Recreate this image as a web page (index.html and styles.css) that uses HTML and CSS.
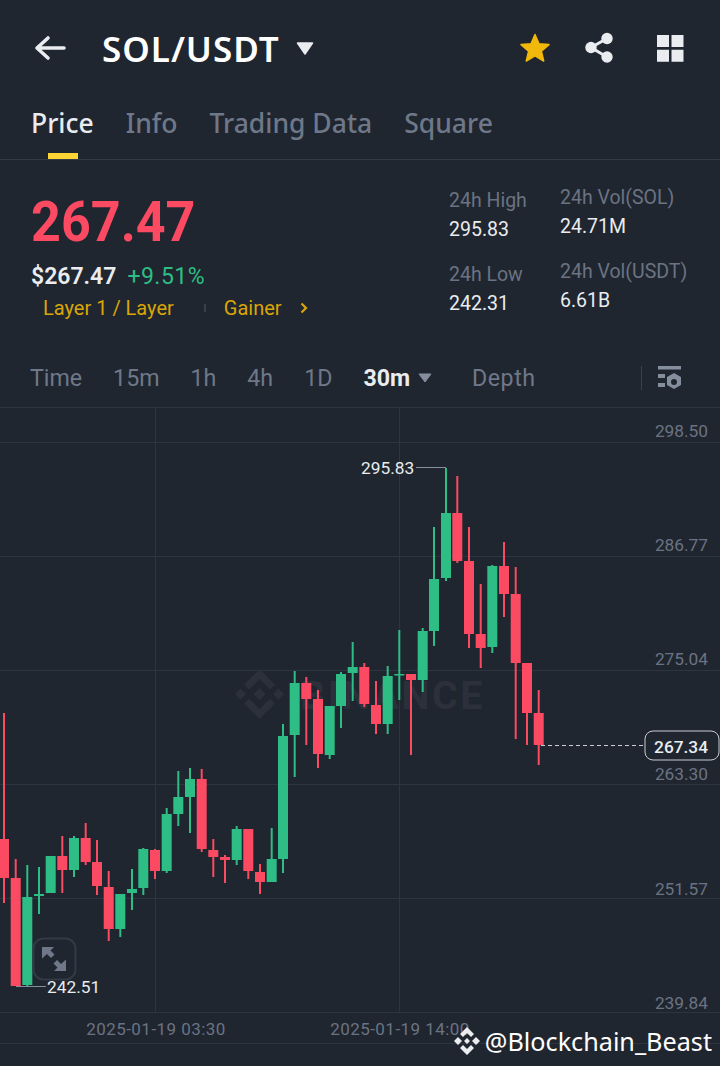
FILE: index.html
```html
<!DOCTYPE html>
<html lang="en">
<head>
    <meta charset="UTF-8">
    <meta name="viewport" content="width=device-width, initial-scale=1.0">
    <title>SOL/USDT</title>
    <link rel="stylesheet" href="styles.css">
</head>
<body>
    <header class="topbar">
        <svg class="back-icon" width="32" height="26" viewBox="0 0 32 26">
            <path d="M30 13H3M14 3 3 13l11 10" fill="none" stroke="#eaecef" stroke-width="3.6" stroke-linecap="round" stroke-linejoin="round"/>
        </svg>
        <h1 class="pair">SOL/USDT</h1>
        <svg class="pair-caret" width="18" height="13" viewBox="0 0 18 13">
            <path d="M1.5 1h15L9 12z" fill="#eaecef" stroke="#eaecef" stroke-width="1.5" stroke-linejoin="round"/>
        </svg>
        <div class="top-actions">
            <svg width="32" height="32" viewBox="0 0 32 32">
                <path d="M16 2.500l4 9.200 10 .9-7.600 6.600 2.300 9.800L16 23.800 7.300 29l2.300-9.800L2 12.600l10-.9z" fill="#f0b90b" stroke="#f0b90b" stroke-width="1.500" stroke-linejoin="round"/>
            </svg>
            <svg class="share-icon" width="32" height="32" viewBox="0 0 32 32">
                <path d="M24 6.500 8 15.500 24 25" fill="none" stroke="#eaecef" stroke-width="3"/>
                <circle cx="24" cy="6.500" r="5.700" fill="#eaecef"/>
                <circle cx="8" cy="15.500" r="5.700" fill="#eaecef"/>
                <circle cx="24" cy="25" r="5.700" fill="#eaecef"/>
            </svg>
            <svg width="28" height="28" viewBox="0 0 28 28">
                <path d="M1 1h12v12H1zM15.500 1h12v12h-12zM1 15.700h12v12H1zM15.500 15.700h12v12h-12z" fill="#eaecef"/>
            </svg>
        </div>
    </header>

    <nav class="tabs">
        <a class="tab active">Price</a>
        <a class="tab">Info</a>
        <a class="tab">Trading Data</a>
        <a class="tab">Square</a>
    </nav>

    <section class="stats">
        <div class="stats-main">
            <div class="last-price">267.47</div>
            <div class="price-line">
                <span class="usd-price">$267.47</span>
                <span class="change">+9.51%</span>
            </div>
            <div class="tags">
                <span>Layer 1 / Layer</span>
                <span class="tag-sep"></span>
                <span>Gainer</span>
                <svg width="8" height="12" viewBox="0 0 8 12">
                    <path d="M1.500 1.500 6 6l-4.500 4.500" fill="none" stroke="#d9a507" stroke-width="2.200"/>
                </svg>
            </div>
        </div>
        <div class="stats-col col-left">
            <div class="stat-label">24h High</div>
            <div class="stat-value">295.83</div>
            <div class="stat-label second">24h Low</div>
            <div class="stat-value">242.31</div>
        </div>
        <div class="stats-col">
            <div class="stat-label">24h Vol(SOL)</div>
            <div class="stat-value">24.71M</div>
            <div class="stat-label second">24h Vol(USDT)</div>
            <div class="stat-value">6.61B</div>
        </div>
    </section>

    <div class="timeframes">
        <span>Time</span>
        <span>15m</span>
        <span>1h</span>
        <span>4h</span>
        <span>1D</span>
        <span class="current">30m</span>
        <svg class="tf-caret" width="14" height="10" viewBox="0 0 14 10">
            <path d="M1 1h12L7 9z" fill="#848e9c" stroke="#848e9c" stroke-linejoin="round"/>
        </svg>
        <span class="depth">Depth</span>
        <span class="tf-divider"></span>
        <svg width="24" height="24" viewBox="0 0 24 24">
            <path d="M0 0h23v3.500H0zM0 8h7v4H0zM0 17h7v4H0z" fill="#848e9c"/>
            <path fill-rule="evenodd" d="M16 7l7 4v8l-7 4-7-4v-8zm0 6a3 3 0 1 0 0 6 3 3 0 0 0 0-6z" fill="#848e9c"/>
        </svg>
    </div>

    <div class="chart">
        <svg class="chart-svg" width="720" height="659" viewBox="0 407 720 659">
            <g class="grid">
                <path d="M0 407.500H720M0 442.500H720M0 556.500H720M0 670.500H720M0 784.500H720M0 898.500H720M0 1012.500H720M0 1043.500H720M155.500 408V1012M399.500 408V1012"/>
            </g>

            <g class="watermark">
                <path d="M259.500 669 275 684.500 270 689.500 259.500 679 249 689.500 244 684.500zM259.500 719 275 703.500 270 698.500 259.500 709 249 698.500 244 703.500zM240.500 688.500 246 694 240.500 699.500 235 694zM259.500 688 265.500 694 259.500 700 253.500 694zM278.500 688.500 284 694 278.500 699.500 273 694z"/>
                <text x="300" y="708.500" class="wm-text">BINANCE</text>
            </g>

            <g id="candles"></g>

            <g class="axis">
                <text x="708" y="437">298.50</text>
                <text x="708" y="551">286.77</text>
                <text x="708" y="665">275.04</text>
                <text x="708" y="780">263.30</text>
                <text x="708" y="895">251.57</text>
                <text x="708" y="1009">239.84</text>
                <text x="156" y="1035" class="date">2025-01-19 03:30</text>
                <text x="400" y="1035" class="date">2025-01-19 14:00</text>
            </g>

            <path class="hl-line" d="M416 467.500H446M16 986.500H46"/>
            <text x="361" y="474" class="hl-text">295.83</text>
            <text x="47" y="993" class="hl-text">242.51</text>

            <path class="last-line" d="M541 745.500H645"/>
            <rect class="last-box" x="645" y="731" width="74" height="29" rx="8"/>
            <text x="708" y="753" class="last-text">267.34</text>

            <rect class="expand-box" x="33.500" y="938.500" width="42" height="41" rx="10"/>
            <path class="expand-icon" d="M42 947h12l-3.500 3.500 4 4-3.500 3.500-4-4-5 4.500zM66 971H54l3.500-3.500-4-4 3.500-3.500 4 4 5-4.500z"/>
        </svg>

        <div class="credit">
            <svg width="28" height="28" viewBox="0 0 28 28">
                <path d="M14 0l7 7-3 3-4-4-4 4-3-3zM5 10l4 4-4 4-4-4zM14 11l3 3-3 3-3-3zM23 10l4 4-4 4-4-4zM14 28l7-7-3-3-4 4-4-4-3 3z" fill="#eaecef"/>
            </svg>
            <span>@Blockchain_Beast</span>
        </div>
    </div>

    <script src="chart.js"></script>
</body>
</html>
```

FILE: styles.css
```css
body {
    margin: 0;
    width: 720px;
    height: 1066px;
    overflow: hidden;
    background-color: #1f2630;
    color: #eaecef;
    font-family: "Noto Sans", sans-serif;
}

/* top bar */
.topbar {
    display: flex;
    align-items: center;
    height: 96px;
    padding: 0 36px 0 34px;
    box-sizing: border-box;
}

.back-icon {
    margin-right: 36px;
}

.pair {
    margin: 0 16px 0 0;
    font-size: 35px;
    font-weight: 600;
    letter-spacing: 1px;
    color: #fff;
}

.top-actions {
    display: flex;
    align-items: center;
    gap: 32px;
    margin-left: auto;
}

.share-icon {
    margin-right: 9px;
}

/* tabs */
.tabs {
    display: flex;
    gap: 32px;
    height: 64px;
    padding-left: 31px;
    box-sizing: border-box;
    border-bottom: 1px solid #333a46;
}

.tab {
    position: relative;
    font-size: 26.5px;
    font-weight: 500;
    line-height: 54px;
    color: #6f7888;
}

.tab.active {
    color: #eaecef;
}

.tab.active::after {
    content: "";
    position: absolute;
    left: 17px;
    bottom: 0;
    width: 30px;
    height: 6px;
    background-color: #fcd535;
}

/* price block */
.stats {
    display: flex;
    height: 189px;
    box-sizing: border-box;
    padding-top: 24px;
    font-family: Roboto, sans-serif;
}

.stats-main {
    width: 449px;
    padding-left: 31px;
    box-sizing: border-box;
}

.last-price {
    margin-top: 2px;
    font-size: 56px;
    font-weight: 700;
    line-height: 72px;
    color: #fb4a62;
    transform: scaleX(0.93);
    transform-origin: left;
}

.price-line {
    display: flex;
    gap: 11px;
    margin-top: 5px;
    font-size: 23px;
    line-height: 28px;
}

.usd-price {
    font-weight: 600;
}

.change {
    letter-spacing: 0.5px;
    color: #2ebd85;
}

.tags {
    display: flex;
    align-items: center;
    gap: 18px;
    margin: 4px 0 0 12px;
    font-size: 20px;
    line-height: 26px;
    color: #d9a507;
}

.tag-sep {
    width: 2px;
    height: 8px;
    margin-left: 12px;
    background-color: #39404c;
}

.stats-col {
    width: 111px;
    font-size: 19.5px;
    white-space: nowrap;
}

.col-left {
    padding-top: 3px;
}

.stat-label {
    line-height: 28px;
    color: #6b7382;
}

.stat-label.second {
    margin-top: 16px;
}

.stat-value {
    line-height: 30px;
}

/* interval row */
.timeframes {
    display: flex;
    align-items: center;
    height: 58px;
    padding-left: 30px;
    font-family: Roboto, sans-serif;
    font-size: 23.2px;
    color: #6f7888;
}

.timeframes span {
    margin-right: 31px;
}

.timeframes .current {
    margin-right: 8px;
    font-weight: 700;
    color: #eaecef;
}

.tf-caret {
    margin-right: 40px;
}

.timeframes .depth {
    margin-right: 106px;
    letter-spacing: 0.5px;
}

.timeframes .tf-divider {
    width: 1px;
    height: 24px;
    margin-right: 16px;
    background-color: #3a414e;
}

/* chart */
.chart {
    position: relative;
    height: 659px;
}

.chart-svg {
    display: block;
}

.grid path {
    fill: none;
    stroke: #2f3540;
    stroke-width: 1;
}

.watermark path {
    fill: #2b303b;
}

.wm-text {
    font-family: Roboto, sans-serif;
    font-size: 39.5px;
    font-weight: 700;
    letter-spacing: 2.5px;
    fill: #2b303b;
}

.axis text {
    font-family: Roboto, sans-serif;
    font-size: 17.3px;
    fill: #6b7382;
    text-anchor: end;
}

.axis .date {
    font-size: 17px;
    letter-spacing: 0.45px;
    text-anchor: middle;
}

.hl-line {
    fill: none;
    stroke: #848e9c;
    stroke-width: 1;
}

.hl-text {
    font-family: Roboto, sans-serif;
    font-size: 17.3px;
    fill: #eaecef;
}

.last-line {
    fill: none;
    stroke: #c9ccd1;
    stroke-width: 1;
    stroke-dasharray: 4 3;
}

.last-box {
    fill: #1f2630;
    stroke: #c9ccd1;
    stroke-width: 1;
}

.last-text {
    font-family: Roboto, sans-serif;
    font-size: 17.3px;
    font-weight: 500;
    fill: #eaecef;
    text-anchor: end;
}

.expand-box {
    fill: none;
    stroke: #333945;
    stroke-width: 2;
}

.expand-icon {
    fill: #6f7888;
}

.up {
    fill: #2ebd85;
}

.down {
    fill: #fb4a62;
}

/* repost credit over the chart */
.credit {
    position: absolute;
    right: 8px;
    bottom: 10px;
    display: flex;
    align-items: center;
    gap: 4px;
    font-size: 25.2px;
    line-height: 30px;
    color: #fff;
}
```

FILE: chart.js
```js
// x, wick top, wick bottom, body top, body bottom, up?
const candles = [
    [4, 713, 903, 839, 878, 0],
    [15.7, 859, 986, 878, 986, 0],
    [27.3, 865, 986, 897, 985, 1],
    [39, 867, 914, 894, 896, 1],
    [50.7, 856, 893, 856, 893, 1],
    [62.3, 836, 893, 856, 870, 0],
    [74, 836, 877, 838, 870, 1],
    [85.7, 823, 865, 838, 862, 0],
    [97, 840, 895, 862, 886, 0],
    [108.7, 871, 941, 887, 929, 0],
    [120.3, 894, 937, 894, 929, 1],
    [132, 869, 910, 889, 893, 1],
    [143.3, 848, 895, 849, 888, 1],
    [155, 849, 879, 850, 871, 0],
    [166.7, 808, 873, 814, 871, 1],
    [178.3, 771, 826, 797, 814, 1],
    [190, 768, 833, 779, 797, 1],
    [201.7, 769, 852, 779, 849, 0],
    [213.3, 839, 877, 850, 857, 0],
    [225, 855, 883, 857, 860, 0],
    [236.7, 826, 865, 829, 860, 1],
    [248.3, 829, 879, 829, 871, 0],
    [260, 864, 894, 872, 882, 0],
    [271.7, 828, 882, 859, 882, 1],
    [283, 724, 873, 736, 859, 1],
    [294.7, 671, 777, 683, 735, 1],
    [306.3, 677, 745, 683, 699, 0],
    [318, 690, 768, 699, 754, 0],
    [329.7, 706, 759, 706, 755, 1],
    [341, 672, 728, 674, 706, 1],
    [352.7, 642, 701, 667, 673, 1],
    [364.3, 663, 707, 667, 704, 0],
    [376, 681, 734, 705, 724, 0],
    [387.7, 666, 734, 676, 724, 1],
    [399.3, 630, 700, 674, 675.5, 1],
    [411, 674, 755, 674, 680, 0],
    [422.7, 628, 692, 631, 680, 1],
    [434, 527, 646, 579, 631, 1],
    [446, 468, 581, 513, 578, 1],
    [457.3, 476, 563, 513, 561, 0],
    [469, 527, 648, 561, 634, 0],
    [480.7, 584, 668, 634, 648, 0],
    [492.3, 565, 653, 566, 647, 1],
    [504, 542, 617, 566, 594, 0],
    [515.7, 567, 739, 594, 663, 0],
    [527, 663, 745, 663, 713, 0],
    [538.7, 690, 765, 713, 745, 0]
];

const layer = document.getElementById('candles');
const svgNs = 'http://www.w3.org/2000/svg';

function addRect(x, y, w, h, cls) {
    const r = document.createElementNS(svgNs, 'rect');
    r.setAttribute('x', x);
    r.setAttribute('y', y);
    r.setAttribute('width', w);
    r.setAttribute('height', h);
    r.setAttribute('class', cls);
    layer.appendChild(r);
}

candles.forEach(([x, high, low, top, bottom, up]) => {
    const cls = up ? 'up' : 'down';
    addRect(x - 1, high, 2, low - high, cls);
    addRect(x - 5, top, 10, bottom - top, cls);
});
```
